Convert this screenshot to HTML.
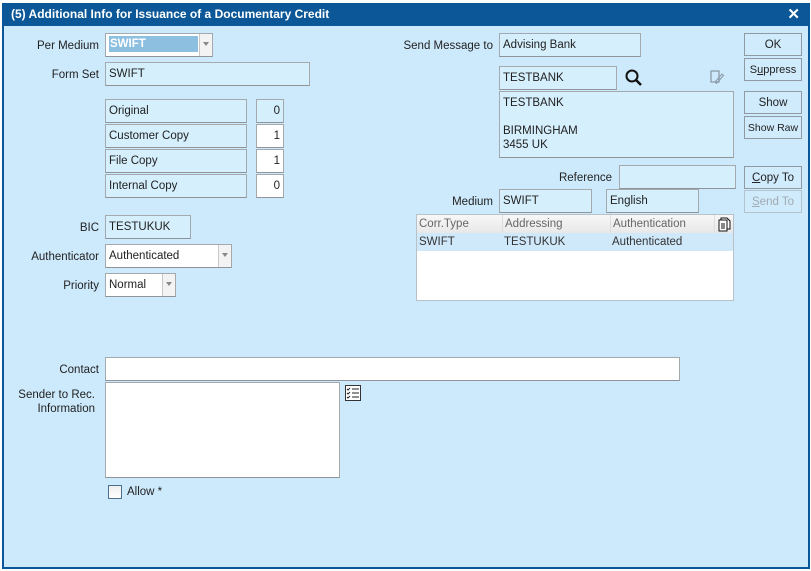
<!DOCTYPE html>
<html><head><style>
body{margin:0;width:811px;height:571px;background:#fff;font-family:"Liberation Sans",Arial,sans-serif;font-size:11.5px;color:#222;position:relative;overflow:hidden}
.dlg{position:absolute;left:2px;top:3px;width:804px;height:564px;background:#cdeafc;border:2px solid #0b5797;border-top:none}
.title{position:absolute;left:2px;top:3px;width:808px;height:23px;background:#0b5797;color:#fff;font-weight:bold;font-size:12px;line-height:23px}
.title span{position:absolute;left:9px}
.title b{position:absolute;right:10px;font-size:15px}
.a{position:absolute}
.lbl{position:absolute;text-align:right;line-height:14px}
.f{position:absolute;box-sizing:border-box;background:#d5effd;border:1px solid #a3a9ad;border-bottom-color:#8e9498;padding-left:3px;line-height:22px;white-space:nowrap;overflow:hidden}
.w{background:#fff}
.n{text-align:right;padding-right:3px}
.dd{position:absolute;top:0;right:0;width:12px;height:100%;border-left:1px solid #c8c8c8;background:#f3f3f3}
.dd:after{content:"";position:absolute;left:3px;top:8px;border:3px solid transparent;border-top:4px solid #888}
.btn{position:absolute;left:744px;width:58px;height:23px;box-sizing:border-box;border:1px solid #8f9aa3;background:#d0ebfc;text-align:center;line-height:22px;font-size:11.5px}
</style></head><body>
<div class="dlg"></div>
<div class="title"><span>(5) Additional Info for Issuance of a Documentary Credit</span><b>✕</b></div>

<div class="lbl" style="left:20px;width:79px;top:39px">Per Medium</div>
<div class="f" style="left:105px;top:33px;width:108px;height:24px;background:#fff;line-height:20px"><span style="display:inline-block;background:#8dbfe1;color:#fff;font-weight:bold;width:88px;line-height:16px;margin-top:2px;padding-left:1px">SWIFT</span><div class="dd"></div></div>
<div class="lbl" style="left:20px;width:79px;top:68px">Form Set</div>
<div class="f" style="left:105px;top:62px;width:205px;height:24px">SWIFT</div>

<div class="f" style="left:105px;top:99px;width:142px;height:24px">Original</div>
<div class="f n" style="left:256px;top:99px;width:28px;height:24px">0</div>
<div class="f" style="left:105px;top:124px;width:142px;height:24px">Customer Copy</div>
<div class="f n w" style="left:256px;top:124px;width:28px;height:24px">1</div>
<div class="f" style="left:105px;top:149px;width:142px;height:24px">File Copy</div>
<div class="f n w" style="left:256px;top:149px;width:28px;height:24px">1</div>
<div class="f" style="left:105px;top:174px;width:142px;height:24px">Internal Copy</div>
<div class="f n w" style="left:256px;top:174px;width:28px;height:24px">0</div>

<div class="lbl" style="left:20px;width:79px;top:221px">BIC</div>
<div class="f" style="left:105px;top:215px;width:86px;height:24px">TESTUKUK</div>
<div class="lbl" style="left:10px;width:89px;top:250px">Authenticator</div>
<div class="f w" style="left:105px;top:244px;width:127px;height:24px">Authenticated<div class="dd"></div></div>
<div class="lbl" style="left:20px;width:79px;top:279px">Priority</div>
<div class="f w" style="left:105px;top:273px;width:71px;height:24px">Normal<div class="dd"></div></div>

<div class="lbl" style="left:380px;width:113px;top:39px">Send Message to</div>
<div class="f" style="left:499px;top:33px;width:142px;height:24px">Advising Bank</div>
<div class="f" style="left:499px;top:66px;width:118px;height:24px">TESTBANK</div>
<svg class="a" style="left:624px;top:68px" width="20" height="20" viewBox="0 0 20 20"><circle cx="8" cy="8" r="5.5" fill="none" stroke="#111" stroke-width="2"/><path d="M12 12l5 5" stroke="#111" stroke-width="2.5"/></svg>
<svg class="a" style="left:709px;top:69px" width="16" height="16" viewBox="0 0 16 16"><path d="M2 2h8v11H2z" fill="none" stroke="#8a9aa6" stroke-width="1.3"/><path d="M6 13l7-8 1.5 1.5-7 8z" fill="none" stroke="#8a9aa6"/></svg>
<div class="f" style="left:499px;top:91px;width:235px;height:67px;line-height:14px;padding-top:4px">TESTBANK<br><br>BIRMINGHAM<br>3455 UK</div>

<div class="lbl" style="left:520px;width:92px;top:171px">Reference</div>
<div class="f" style="left:619px;top:165px;width:117px;height:24px"></div>
<div class="lbl" style="left:420px;width:73px;top:195px">Medium</div>
<div class="f" style="left:499px;top:189px;width:93px;height:24px">SWIFT</div>
<div class="f" style="left:606px;top:189px;width:93px;height:24px">English</div>

<div class="a" style="left:416px;top:214px;width:318px;height:87px;background:#fff;border:1px solid #b9c2c8;box-sizing:border-box"></div>
<div class="a" style="left:417px;top:215px;width:316px;height:18px;background:linear-gradient(#f7f7f7,#e8e8e8);color:#666;line-height:19px">
<span class="a" style="left:2px">Corr.Type</span><span class="a" style="left:85px;border-left:1px solid #ddd;padding-left:2px;height:18px">Addressing</span><span class="a" style="left:193px;border-left:1px solid #ddd;padding-left:2px;height:18px">Authentication</span><span class="a" style="left:297px;border-left:1px solid #ddd;height:18px;width:19px"></span></div>
<svg class="a" style="left:718px;top:217px" width="13" height="15" viewBox="0 0 13 15"><path d="M1 3h8v11H1z M3 3V1h6l3 3v8H9" fill="#fff" stroke="#111"/><path d="M3 7h4M3 9h4M3 11h4" stroke="#111"/></svg>
<div class="a" style="left:417px;top:233px;width:316px;height:18px;background:#cfe9fb;line-height:19px;color:#333">
<span class="a" style="left:2px">SWIFT</span><span class="a" style="left:87px">TESTUKUK</span><span class="a" style="left:195px">Authenticated</span></div>

<div class="btn" style="top:33px">OK</div>
<div class="btn" style="top:58px;font-size:11px">S<u>u</u>ppress</div>
<div class="btn" style="top:91px">Show</div>
<div class="btn" style="top:116px;font-size:10.5px">Show Raw</div>
<div class="btn" style="top:166px"><u>C</u>opy To</div>
<div class="btn" style="top:190px;color:#a0aab2;border-color:#b3c3cf"><u>S</u>end To</div>

<div class="lbl" style="left:20px;width:79px;top:363px">Contact</div>
<div class="f w" style="left:105px;top:357px;width:575px;height:24px"></div>
<div class="lbl" style="left:5px;width:90px;top:388px">Sender to Rec.<br>Information</div>
<div class="f w" style="left:105px;top:382px;width:235px;height:96px"></div>
<svg class="a" style="left:345px;top:385px" width="16" height="16" viewBox="0 0 16 16"><rect x="0.5" y="0.5" width="15" height="15" fill="#fff" stroke="#333"/><path d="M2 4l1 1 2-2M2 8l1 1 2-2M2 12l1 1 2-2M7 4h7M7 8h7M7 12h7" stroke="#222" fill="none"/></svg>
<div class="a" style="left:108px;top:485px;width:12px;height:12px;border:1px solid #4a6f8f;background:linear-gradient(#eee,#fff)"></div>
<div class="a" style="left:127px;top:486px">Allow *</div>
</body></html>
